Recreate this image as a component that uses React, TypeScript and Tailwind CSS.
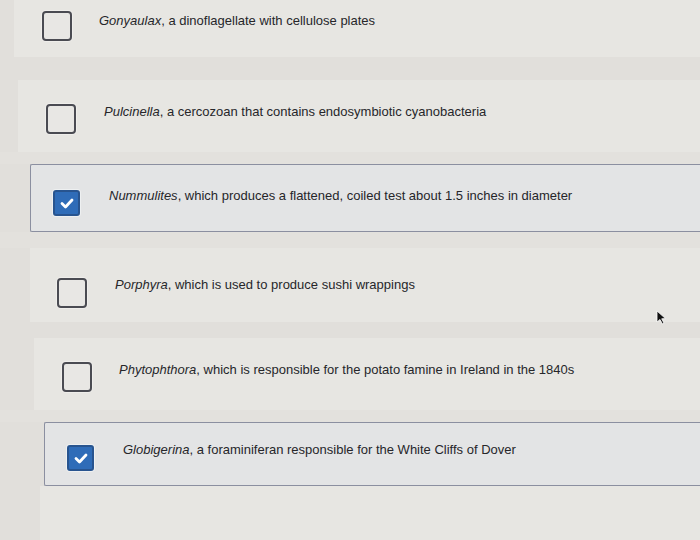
import React from "react";

const Check = () => (
  <svg width="14" height="11" viewBox="0 0 14 11">
    <path d="M2 5.5 L5.5 9 L12 2" fill="none" stroke="#ffffff" strokeWidth="2.8" strokeLinecap="round" strokeLinejoin="round" />
  </svg>
);

const Unchecked = () => (
  <div className="w-[30px] h-[30px] shrink-0 rounded-[4px] border-2 border-[#4a4b52] bg-[#e8e7e4] shadow-[0_0_0_1px_#efeeeb]" />
);

const Checked = () => (
  <div className="w-[27px] h-[26px] shrink-0 rounded-[3px] border-2 border-[#28548f] bg-[#2f6cb8] flex items-center justify-center shadow-[0_0_0_1px_#eef0f1]">
    <Check />
  </div>
);

function Label({ em, rest }: { em: string; rest: string }) {
  return (
    <p className="text-[13px] leading-[16px] text-[#26262a] whitespace-nowrap">
      <i>{em}</i>
      {rest}
    </p>
  );
}

export default function App() {
  return (
    <div
      className="relative w-[700px] h-[540px] overflow-hidden bg-[#e1dfdb] flex flex-col"
      style={{ fontFamily: '"Liberation Sans", Arial, sans-serif' }}
    >
      {/* Row 1 */}
      <div className="ml-[14px] h-[57px] bg-[#e7e6e2] flex items-start pl-[28px]">
        <div className="mt-[11px]"><Unchecked /></div>
        <div className="mt-[13px] ml-[27px]">
          <Label em="Gonyaulax" rest=", a dinoflagellate with cellulose plates" />
        </div>
      </div>
      <div className="h-[23px]" />
      {/* Row 2 */}
      <div className="ml-[18px] h-[72px] bg-[#e7e6e2] flex items-start pl-[28px]">
        <div className="mt-[24px]"><Unchecked /></div>
        <div className="mt-[24px] ml-[28px]">
          <Label em="Pulcinella" rest=", a cercozoan that contains endosymbiotic cyanobacteria" />
        </div>
      </div>
      <div className="h-[12px] bg-[#e3e1dd]" />
      {/* Row 3 checked */}
      <div className="ml-[30px] h-[68px] bg-[#e3e4e5] border-[1.5px] border-r-0 border-[#8b8fa0] rounded-l-[2px] flex items-start pl-[22px]">
        <div className="mt-[25px]"><Checked /></div>
        <div className="mt-[23px] ml-[29px]">
          <Label em="Nummulites" rest=", which produces a flattened, coiled test about 1.5 inches in diameter" />
        </div>
      </div>
      <div className="h-[16px] bg-[#e3e1dd]" />
      {/* Row 4 */}
      <div className="ml-[30px] h-[74px] bg-[#e7e6e2] flex items-start pl-[27px]">
        <div className="mt-[30px]"><Unchecked /></div>
        <div className="mt-[29px] ml-[28px]">
          <Label em="Porphyra" rest=", which is used to produce sushi wrappings" />
        </div>
      </div>
      <div className="h-[16px]" />
      {/* Row 5 */}
      <div className="ml-[34px] h-[72px] bg-[#e7e6e2] flex items-start pl-[28px]">
        <div className="mt-[24px]"><Unchecked /></div>
        <div className="mt-[24px] ml-[27px]">
          <Label em="Phytophthora" rest=", which is responsible for the potato famine in Ireland in the 1840s" />
        </div>
      </div>
      <div className="h-[12px] bg-[#e3e1dd]" />
      {/* Row 6 checked */}
      <div className="ml-[44px] h-[64px] bg-[#e3e4e5] border-[1.5px] border-r-0 border-[#8b8fa0] rounded-l-[2px] flex items-start pl-[22px]">
        <div className="mt-[22px]"><Checked /></div>
        <div className="mt-[19px] ml-[29px]">
          <Label em="Globigerina" rest=", a foraminiferan responsible for the White Cliffs of Dover" />
        </div>
      </div>
      <div className="ml-[40px] flex-1 bg-[#e7e6e2]" />

      {/* cursor */}
      <svg className="absolute left-[656px] top-[310px]" width="12" height="16" viewBox="0 0 12 16">
        <path d="M1 1 L1 12 L4 9.5 L6.5 14 L8 13.2 L5.7 8.8 L9.5 8.6 Z" fill="#111" stroke="#fff" strokeWidth="0.8" />
      </svg>
    </div>
  );
}
